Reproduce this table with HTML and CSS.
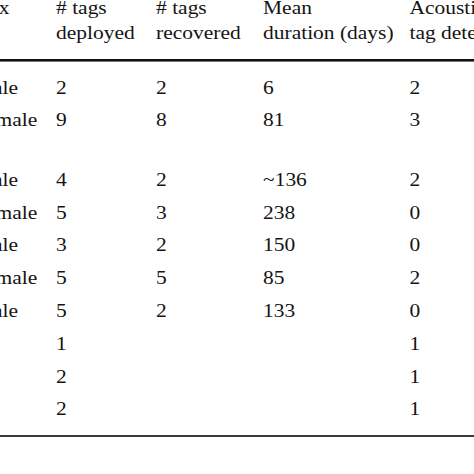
FILE: index.html
```html
<!DOCTYPE html>
<html>
<head>
<meta charset="utf-8">
<link rel="stylesheet" href="styles.css">
</head>
<body>
<div class="page">
  <div class="tbl">
    <div class="row head">
      <div class="cell first">Sex</div>
      <div class="cell"># tags<br>deployed</div>
      <div class="cell"># tags<br>recovered</div>
      <div class="cell">Mean<br>duration (days)</div>
      <div class="cell">Acoustic<br>tag detections</div>
    </div>
    <div class="body">
      <div class="row"><div class="cell">Male</div><div class="cell">2</div><div class="cell">2</div><div class="cell">6</div><div class="cell">2</div></div>
      <div class="row"><div class="cell">Female</div><div class="cell">9</div><div class="cell">8</div><div class="cell">81</div><div class="cell">3</div></div>
      <div class="spacer"></div>
      <div class="row"><div class="cell">Male</div><div class="cell">4</div><div class="cell">2</div><div class="cell">~136</div><div class="cell">2</div></div>
      <div class="row"><div class="cell">Female</div><div class="cell">5</div><div class="cell">3</div><div class="cell">238</div><div class="cell">0</div></div>
      <div class="row"><div class="cell">Male</div><div class="cell">3</div><div class="cell">2</div><div class="cell">150</div><div class="cell">0</div></div>
      <div class="row"><div class="cell">Female</div><div class="cell">5</div><div class="cell">5</div><div class="cell">85</div><div class="cell">2</div></div>
      <div class="row"><div class="cell">Male</div><div class="cell">5</div><div class="cell">2</div><div class="cell">133</div><div class="cell">0</div></div>
      <div class="row"><div class="cell"></div><div class="cell">1</div><div class="cell"></div><div class="cell"></div><div class="cell">1</div></div>
      <div class="row"><div class="cell"></div><div class="cell">2</div><div class="cell"></div><div class="cell"></div><div class="cell">1</div></div>
      <div class="row"><div class="cell"></div><div class="cell">2</div><div class="cell"></div><div class="cell"></div><div class="cell">1</div></div>
    </div>
  </div>
</div>
</body>
</html>
```
FILE: styles.css
```css
html, body {
  margin: 0;
  padding: 0;
  background: #ffffff;
}
.page {
  width: 474px;
  height: 474px;
  overflow: hidden;
  position: relative;
}
.tbl {
  width: 450px;
  margin-left: -26px;
  margin-top: -4px;
  transform: scaleX(1.13);
  transform-origin: 0 0;
  font-family: "Liberation Serif", "Times New Roman", serif;
  font-size: 19px;
  color: #141414;
}
.row {
  display: grid;
  grid-template-columns: 72.6px 88.5px 94.7px 129.6px 1fr;
  white-space: nowrap;
}
.head {
  line-height: 24.5px;
  padding-bottom: 14px;
  border-bottom: 2px solid #111;
  box-shadow: 0 1px 0 #777;
}
.head .first {
  padding-left: 3px;
}
.body {
  padding-top: 10.7px;
  padding-bottom: 8.6px;
  border-bottom: 2px solid #3a3a3a;
  line-height: 32.8px;
}
.body .row {
  height: 32.8px;
}
.spacer {
  height: 26.5px;
}
```
